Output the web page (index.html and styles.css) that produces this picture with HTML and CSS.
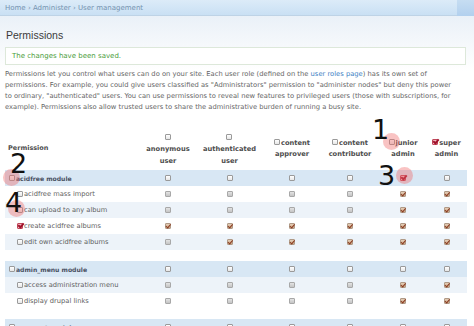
FILE: index.html
```html
<!DOCTYPE html>
<html>
<head>
<meta charset="utf-8">
<link rel="stylesheet" href="styles.css">
</head>
<body>
<div class="breadcrumb"><span>Home › Administer › User management</span><div class="bc-end"></div></div>
<div class="page">
  <h1 class="title">Permissions</h1>
  <div class="status">The changes have been saved.</div>
  <p class="help">Permissions let you control what users can do on your site. Each user role (defined on the <a href="#">user roles page</a>) has its own set of<br>permissions. For example, you could give users classified as "Administrators" permission to "administer nodes" but deny this power<br>to ordinary, "authenticated" users. You can use permissions to reveal new features to privileged users (those with subscriptions, for<br>example). Permissions also allow trusted users to share the administrative burden of running a busy site.</p>
  <table class="perms">
    <colgroup>
      <col class="c-perm"><col class="c-anon"><col class="c-auth"><col class="c-appr"><col class="c-contr"><col class="c-jun"><col class="c-sup">
    </colgroup>
    <thead>
      <tr>
        <th class="perm-h">Permission</th>
        <th class="tall"><span class="cb"></span><br>anonymous<br>user</th>
        <th class="tall"><span class="cb"></span><br>authenticated<br>user</th>
        <th><span class="cb"></span>content<br>approver</th>
        <th><span class="cb"></span>content<br>contributor</th>
        <th><span class="cb"></span>junior<br>admin</th>
        <th class="last"><span class="cb red"></span>super<br>admin</th>
      </tr>
    </thead>
    <tbody>
      <tr class="module">
        <td class="name"><span class="cb"></span>acidfree module</td>
        <td><span class="cb"></span></td><td><span class="cb"></span></td><td><span class="cb"></span></td><td><span class="cb"></span></td><td><span class="cb red"></span></td><td class="last"><span class="cb"></span></td>
      </tr>
      <tr class="even">
        <td class="sub"><span class="cb"></span>acidfree mass import</td>
        <td><span class="cb dis"></span></td><td><span class="cb dis"></span></td><td><span class="cb dis"></span></td><td><span class="cb dis"></span></td><td><span class="cb on"></span></td><td class="last"><span class="cb on"></span></td>
      </tr>
      <tr class="odd">
        <td class="sub"><span class="cb"></span>can upload to any album</td>
        <td><span class="cb dis"></span></td><td><span class="cb dis"></span></td><td><span class="cb dis"></span></td><td><span class="cb dis"></span></td><td><span class="cb on"></span></td><td class="last"><span class="cb on"></span></td>
      </tr>
      <tr class="even">
        <td class="sub"><span class="cb red"></span>create acidfree albums</td>
        <td><span class="cb on"></span></td><td><span class="cb on"></span></td><td><span class="cb on"></span></td><td><span class="cb on"></span></td><td><span class="cb on"></span></td><td class="last"><span class="cb on"></span></td>
      </tr>
      <tr class="odd">
        <td class="sub"><span class="cb"></span>edit own acidfree albums</td>
        <td><span class="cb dis"></span></td><td><span class="cb on"></span></td><td><span class="cb on"></span></td><td><span class="cb on"></span></td><td><span class="cb on"></span></td><td class="last"><span class="cb on"></span></td>
      </tr>
      <tr class="spacer"><td colspan="7"></td></tr>
      <tr class="module">
        <td class="name"><span class="cb"></span>admin_menu module</td>
        <td><span class="cb"></span></td><td><span class="cb"></span></td><td><span class="cb"></span></td><td><span class="cb"></span></td><td><span class="cb"></span></td><td class="last"><span class="cb"></span></td>
      </tr>
      <tr class="odd">
        <td class="sub"><span class="cb"></span>access administration menu</td>
        <td><span class="cb dis"></span></td><td><span class="cb dis"></span></td><td><span class="cb dis"></span></td><td><span class="cb dis"></span></td><td><span class="cb on"></span></td><td class="last"><span class="cb on"></span></td>
      </tr>
      <tr class="even">
        <td class="sub"><span class="cb"></span>display drupal links</td>
        <td><span class="cb dis"></span></td><td><span class="cb dis"></span></td><td><span class="cb dis"></span></td><td><span class="cb dis"></span></td><td><span class="cb on"></span></td><td class="last"><span class="cb on"></span></td>
      </tr>
      <tr class="spacer small"><td colspan="7"></td></tr>
      <tr class="module">
        <td class="name"><span class="cb"></span>comment module</td>
        <td><span class="cb"></span></td><td><span class="cb"></span></td><td><span class="cb"></span></td><td><span class="cb"></span></td><td><span class="cb"></span></td><td class="last"><span class="cb"></span></td>
      </tr>
    </tbody>
  </table>
</div>
<span class="mark m1"></span><span class="num n1">1</span>
<span class="mark m2"></span><span class="num n2">2</span>
<span class="mark m3"></span><span class="num n3">3</span>
<span class="mark m4"></span><span class="num n4">4</span>
</body>
</html>
```
FILE: styles.css
```css
html, body {
  margin: 0;
  padding: 0;
  background: #fff;
  overflow: hidden;
}
body {
  position: relative;
  font-family: "DejaVu Sans", Verdana, sans-serif;
  font-size: 7px;
  color: #5f5f5f;
  width: 474px;
  height: 326px;
}
.breadcrumb {
  height: 16px;
  display: flex;
  align-items: center;
  justify-content: space-between;
  padding-left: 5px;
  background: linear-gradient(#dcebf8, #c9e0f4);
  border-bottom: 1px solid #bed3e6;
  color: #7593b0;
  box-sizing: border-box;
}
.bc-end {
  width: 17px;
  height: 16px;
  background: linear-gradient(#c6ddf2, #b2d0ee);
}
.page {
  padding: 0 5px;
  background: linear-gradient(#eaf1f8 0px, #f5f8fb 28px, #fff 55px);
}
.title {
  margin: 0;
  padding-top: 11px;
  padding-left: 1px;
  height: 31px;
  box-sizing: border-box;
  font-family: "Liberation Sans", Arial, sans-serif;
  font-weight: normal;
  font-size: 10.5px;
  line-height: 16px;
  color: #3b3b3b;
}
.status {
  height: 18px;
  box-sizing: border-box;
  width: 461px;
  border: 1px solid #dde8da;
  background: #fff;
  color: #4b9d3c;
  line-height: 16px;
  padding-left: 6px;
}
.help {
  margin: 4px 0 0 0;
  line-height: 11px;
  color: #666;
  font-size: 6.75px;
  white-space: nowrap;
}
.help a {
  color: #3d7fc4;
  text-decoration: none;
}
.perms {
  margin-top: 15px;
  border-collapse: collapse;
  table-layout: fixed;
  width: 462px;
}
.c-perm { width: 132px; }
.c-anon { width: 62px; }
.c-auth { width: 61px; }
.c-appr { width: 64px; }
.c-contr { width: 52px; }
.c-jun { width: 54px; }
.c-sup { width: 37px; }
.perms th {
  font-weight: bold;
  font-size: 6.7px;
  color: #4d4d4d;
  text-align: center;
  vertical-align: middle;
  line-height: 11.5px;
  height: 42px;
  padding: 0;
  white-space: nowrap;
}
.perms th.tall {
  line-height: 12px;
}
.perms th.perm-h {
  text-align: left;
  padding-left: 3px;
  font-size: 6.5px;
}
.perms th.last, .perms td.last {
  padding-right: 4px;
}
.perms td {
  height: 16px;
  padding: 0;
  text-align: center;
  vertical-align: middle;
  white-space: nowrap;
  font-size: 6.7px;
}
.perms td.name {
  text-align: left;
  padding-left: 4px;
  font-weight: bold;
  font-size: 6.1px;
  color: #485062;
}
.perms td.sub {
  text-align: left;
  padding-left: 12px;
  color: #5f5f5f;
}
.module td { background: #d8e7f4; }
.odd td { background: #edf3f9; }
.even td { background: #fff; }
.spacer td { height: 11px; background: #fff; }
.spacer.small td { height: 10px; }

.cb {
  display: inline-block;
  position: relative;
  width: 6px;
  height: 6px;
  box-sizing: border-box;
  border: 1px solid #9a9a9a;
  border-radius: 1px;
  background: linear-gradient(#ffffff, #e6e6e6);
  vertical-align: -0.5px;
}
td.name .cb, td.sub .cb { margin-right: 1px; }
th .cb { margin-right: 1px; }
.cb.dis {
  border-color: #a8a8a8;
  background: linear-gradient(#e3e3e3, #c4c4c4);
}
.cb.on {
  border-color: #b09a87;
  background: linear-gradient(#e6cfb8, #c9a887);
}
.cb.on::after, .cb.red::after {
  content: "";
  position: absolute;
  left: 1px;
  top: -1px;
  width: 1.5px;
  height: 3.5px;
  border-right: 1.5px solid #8a3a20;
  border-bottom: 1.5px solid #8a3a20;
  transform: rotate(40deg);
}
.cb.red {
  border-color: #c0485a;
  background: #f1b8c0;
}
.cb.red::after {
  border-color: #a0102a;
  width: 2px;
  height: 4px;
  top: -2px;
  border-right-width: 2px;
  border-bottom-width: 2px;
}

.mark {
  position: absolute;
  width: 17px;
  height: 17px;
  border-radius: 50%;
  background: rgba(240, 105, 105, 0.4);
}
.m1 { left: 383px; top: 133px; }
.m2 { left: 3px; top: 169px; }
.m3 { left: 396px; top: 167px; }
.m4 { left: 8px; top: 200px; }
.num {
  position: absolute;
  font-family: "DejaVu Sans", sans-serif;
  font-size: 27px;
  line-height: 27px;
  color: #111;
}
.n1 { left: 372px; top: 116px; }
.n2 { left: 10px; top: 150px; }
.n3 { left: 378px; top: 162px; }
.n4 { left: 5px; top: 189px; }
```
